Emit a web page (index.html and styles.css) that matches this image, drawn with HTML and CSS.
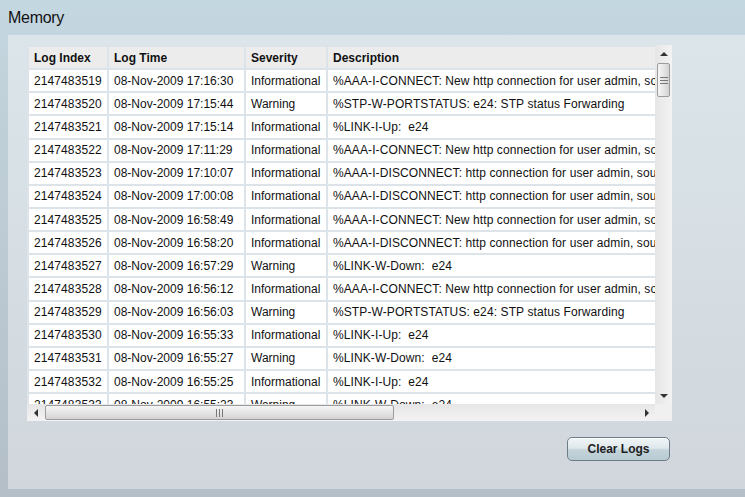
FILE: index.html
```html
<!DOCTYPE html>
<html>
<head>
<meta charset="utf-8">
<link rel="stylesheet" href="styles.css">
</head>
<body>
<h1 class="title">Memory</h1>
<div class="panel">
  <div class="scroller">
    <div class="viewport">
      <table class="log">
        <thead>
          <tr><th class="c-idx">Log Index</th><th class="c-time">Log Time</th><th class="c-sev">Severity</th><th class="c-desc">Description</th></tr>
        </thead>
        <tbody>
          <tr><td class="d-idx">2147483519</td><td>08-Nov-2009 17:16:30</td><td>Informational</td><td class="d-desc">%AAA-I-CONNECT: New http connection for user admin, source 192.168.1.10 destination 192.168.1.254 ACCEPTED</td></tr>
          <tr><td class="d-idx">2147483520</td><td>08-Nov-2009 17:15:44</td><td>Warning</td><td class="d-desc">%STP-W-PORTSTATUS: e24: STP status Forwarding</td></tr>
          <tr><td class="d-idx">2147483521</td><td>08-Nov-2009 17:15:14</td><td>Informational</td><td class="d-desc">%LINK-I-Up:  e24</td></tr>
          <tr><td class="d-idx">2147483522</td><td>08-Nov-2009 17:11:29</td><td>Informational</td><td class="d-desc">%AAA-I-CONNECT: New http connection for user admin, source 192.168.1.10 destination 192.168.1.254 ACCEPTED</td></tr>
          <tr><td class="d-idx">2147483523</td><td>08-Nov-2009 17:10:07</td><td>Informational</td><td class="d-desc">%AAA-I-DISCONNECT: http connection for user admin, source 192.168.1.10 destination 192.168.1.254 TERMINATED</td></tr>
          <tr><td class="d-idx">2147483524</td><td>08-Nov-2009 17:00:08</td><td>Informational</td><td class="d-desc">%AAA-I-DISCONNECT: http connection for user admin, source 192.168.1.10 destination 192.168.1.254 TERMINATED</td></tr>
          <tr><td class="d-idx">2147483525</td><td>08-Nov-2009 16:58:49</td><td>Informational</td><td class="d-desc">%AAA-I-CONNECT: New http connection for user admin, source 192.168.1.10 destination 192.168.1.254 ACCEPTED</td></tr>
          <tr><td class="d-idx">2147483526</td><td>08-Nov-2009 16:58:20</td><td>Informational</td><td class="d-desc">%AAA-I-DISCONNECT: http connection for user admin, source 192.168.1.10 destination 192.168.1.254 TERMINATED</td></tr>
          <tr><td class="d-idx">2147483527</td><td>08-Nov-2009 16:57:29</td><td>Warning</td><td class="d-desc">%LINK-W-Down:  e24</td></tr>
          <tr><td class="d-idx">2147483528</td><td>08-Nov-2009 16:56:12</td><td>Informational</td><td class="d-desc">%AAA-I-CONNECT: New http connection for user admin, source 192.168.1.10 destination 192.168.1.254 ACCEPTED</td></tr>
          <tr><td class="d-idx">2147483529</td><td>08-Nov-2009 16:56:03</td><td>Warning</td><td class="d-desc">%STP-W-PORTSTATUS: e24: STP status Forwarding</td></tr>
          <tr><td class="d-idx">2147483530</td><td>08-Nov-2009 16:55:33</td><td>Informational</td><td class="d-desc">%LINK-I-Up:  e24</td></tr>
          <tr><td class="d-idx">2147483531</td><td>08-Nov-2009 16:55:27</td><td>Warning</td><td class="d-desc">%LINK-W-Down:  e24</td></tr>
          <tr><td class="d-idx">2147483532</td><td>08-Nov-2009 16:55:25</td><td>Informational</td><td class="d-desc">%LINK-I-Up:  e24</td></tr>
          <tr><td class="d-idx">2147483533</td><td>08-Nov-2009 16:55:23</td><td>Warning</td><td class="d-desc">%LINK-W-Down:  e24</td></tr>
        </tbody>
      </table>
    </div>
    <div class="vbar">
      <div class="arrow-btn"><span class="tri tri-up"></span></div>
      <div class="vtrack"><div class="vthumb"><span class="grip-h"></span></div></div>
      <div class="arrow-btn"><span class="tri tri-down"></span></div>
    </div>
    <div class="hbar">
      <div class="arrow-btn"><span class="tri tri-left"></span></div>
      <div class="htrack"><div class="hthumb"><span class="grip-v"></span></div></div>
      <div class="arrow-btn"><span class="tri tri-right"></span></div>
    </div>
    <div class="corner"></div>
  </div>
  <div class="actions">
    <button class="btn">Clear Logs</button>
  </div>
</div>
</body>
</html>
```

FILE: styles.css
```css
html, body {
  margin: 0;
  padding: 0;
}
body {
  width: 745px;
  height: 497px;
  overflow: hidden;
  font-family: "Liberation Sans", Arial, sans-serif;
  background: linear-gradient(to bottom, #c4d8e2 0px, #c2d3dc 60px, #b4bfc8 497px);
}
.title {
  margin: 0;
  height: 35px;
  line-height: 35px;
  padding-left: 8px;
  font-size: 16px;
  font-weight: normal;
  letter-spacing: -0.3px;
  color: #111;
}
.panel {
  margin-left: 8px;
  height: 454px;
  box-sizing: border-box;
  padding: 10px 0 0 19px;
  background: linear-gradient(to bottom, #dbe5ea 0%, #d6dee3 50%, #d0d6dc 100%);
}
.scroller {
  display: grid;
  grid-template-columns: 628px 17px;
  grid-template-rows: 359px 17px;
  width: 645px;
}
.viewport {
  overflow: hidden;
  background: #dde4e9;
}
.log {
  border-collapse: separate;
  border-spacing: 2px;
  table-layout: fixed;
  width: 1043px;
  font-size: 12px;
  color: #111;
}
.log th, .log td {
  height: 21.15px;
  padding: 0 5px;
  text-align: left;
  white-space: pre;
  overflow: hidden;
  box-sizing: border-box;
}
.log th {
  background: #ececec;
  font-weight: bold;
}
.log td {
  background: #ffffff;
}
.log .d-idx {
  letter-spacing: 0.1px;
}
.log .d-desc {
  letter-spacing: 0.1px;
}
.c-idx { width: 78px; }
.c-time { width: 135px; }
.c-sev { width: 80px; }
.c-desc { width: 740px; }

.vbar {
  display: flex;
  flex-direction: column;
  background: linear-gradient(to right, #e6e6e6, #f3f3f3);
}
.hbar {
  display: flex;
  background: linear-gradient(to bottom, #e6e6e6, #f3f3f3);
}
.corner {
  background: #f0f0f0;
}
.arrow-btn {
  flex: 0 0 17px;
  height: 17px;
  display: flex;
  align-items: center;
  justify-content: center;
}
.vtrack, .htrack {
  flex: 1;
  display: flex;
}
.vtrack {
  flex-direction: column;
  padding: 1px 2px 0 2px;
}
.htrack {
  padding: 1px 0 1px 1px;
}
.vthumb {
  height: 34px;
  box-sizing: border-box;
  border: 1px solid #9c9c9c;
  border-radius: 2px;
  background: linear-gradient(to right, #f6f6f6, #e2e2e2 60%, #d2d2d2);
  display: flex;
  align-items: center;
  justify-content: center;
}
.hthumb {
  width: 349px;
  box-sizing: border-box;
  border: 1px solid #9c9c9c;
  border-radius: 2px;
  background: linear-gradient(to bottom, #f6f6f6, #e2e2e2 60%, #d2d2d2);
  display: flex;
  align-items: center;
  justify-content: center;
}
.grip-h {
  width: 8px;
  height: 7px;
  background: repeating-linear-gradient(to bottom, #777 0, #777 1px, transparent 1px, transparent 3px);
}
.grip-v {
  width: 7px;
  height: 8px;
  background: repeating-linear-gradient(to right, #777 0, #777 1px, transparent 1px, transparent 3px);
}
.tri {
  width: 0;
  height: 0;
  display: block;
}
.tri-up {
  border-left: 4px solid transparent;
  border-right: 4px solid transparent;
  border-bottom: 4px solid #333;
}
.tri-down {
  border-left: 4px solid transparent;
  border-right: 4px solid transparent;
  border-top: 4px solid #333;
}
.tri-left {
  border-top: 4px solid transparent;
  border-bottom: 4px solid transparent;
  border-right: 4px solid #333;
}
.tri-right {
  border-top: 4px solid transparent;
  border-bottom: 4px solid transparent;
  border-left: 4px solid #333;
}
.actions {
  width: 643px;
  display: flex;
  justify-content: flex-end;
  padding-top: 16px;
}
.btn {
  width: 103px;
  height: 24px;
  box-sizing: border-box;
  border: 1px solid #6e7c86;
  border-radius: 5px;
  background: linear-gradient(to bottom, #f1f5f7 0%, #dfe8ec 45%, #c3d3da 55%, #b8cad2 100%);
  font-family: "Liberation Sans", Arial, sans-serif;
  font-size: 12px;
  font-weight: bold;
  color: #1e1e1e;
  padding: 0;
  box-shadow: inset 0 1px 0 #ffffff;
}
```
